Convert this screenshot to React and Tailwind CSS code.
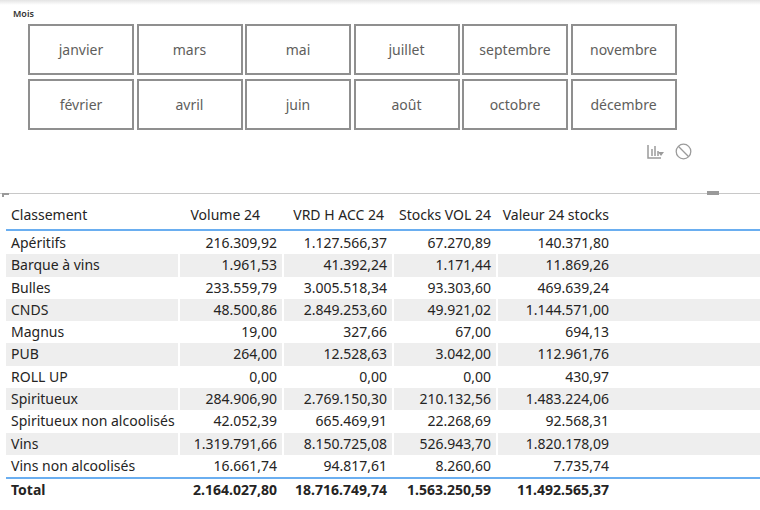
const months = [
  ["janvier", "mars", "mai", "juillet", "septembre", "novembre"],
  ["février", "avril", "juin", "août", "octobre", "décembre"],
];

const rows = [
  ["Apéritifs", "216.309,92", "1.127.566,37", "67.270,89", "140.371,80"],
  ["Barque à vins", "1.961,53", "41.392,24", "1.171,44", "11.869,26"],
  ["Bulles", "233.559,79", "3.005.518,34", "93.303,60", "469.639,24"],
  ["CNDS", "48.500,86", "2.849.253,60", "49.921,02", "1.144.571,00"],
  ["Magnus", "19,00", "327,66", "67,00", "694,13"],
  ["PUB", "264,00", "12.528,63", "3.042,00", "112.961,76"],
  ["ROLL UP", "0,00", "0,00", "0,00", "430,97"],
  ["Spiritueux", "284.906,90", "2.769.150,30", "210.132,56", "1.483.224,06"],
  ["Spiritueux non alcoolisés", "42.052,39", "665.469,91", "22.268,69", "92.568,31"],
  ["Vins", "1.319.791,66", "8.150.725,08", "526.943,70", "1.820.178,09"],
  ["Vins non alcoolisés", "16.661,74", "94.817,61", "8.260,60", "7.735,74"],
];

const cols = "grid grid-cols-[172px_104px_110px_104px_118px]";

export default function App() {
  return (
    <div className="w-[760px] h-[510px] bg-white relative overflow-hidden text-[#252423]" style={{ fontFamily: '"Noto Sans", "Open Sans", sans-serif' }}>
      <div className="h-[5px] bg-gradient-to-b from-[#e4e4e4] to-white" />
      <div className="pl-[13px] pt-[3px] text-[9px] font-semibold leading-[12px] text-[#333]">Mois</div>
      <div className="ml-[28px] mt-[4px] flex flex-col gap-[4px]">
        {months.map((r, i) => (
          <div key={i} className="flex gap-[2.5px]">
            {r.map((m) => (
              <div key={m} className="w-[106px] h-[51px] border-2 border-[#8f8f8f] flex items-center justify-center text-[14px] text-[#605e5c]">
                {m}
              </div>
            ))}
          </div>
        ))}
      </div>
      <div className="flex justify-end gap-[10px] pr-[68px] mt-[13px] text-[#9b9b9b]">
        <svg width="18" height="16" viewBox="0 0 18 16" fill="none" stroke="currentColor" strokeWidth="1.5">
          <path d="M1 2v13h13" />
          <path d="M5 13V6M8 13V3M11 13V8" />
          <path d="M11 9h6l-3 4z" fill="currentColor" stroke="none" />
        </svg>
        <svg width="17" height="17" viewBox="0 0 17 17" fill="none" stroke="currentColor" strokeWidth="1.3">
          <circle cx="8.5" cy="8.5" r="7.3" />
          <path d="M3.3 3.3l10.4 10.4" />
        </svg>
      </div>
      <div className="mt-[33px] border-t border-[#c8c8c8] relative">
        <div className="absolute left-[2px] -top-[1px] w-[7px] h-[4px] border-l-2 border-t-2 border-[#9a9a9a]" />
        <div className="absolute left-[707px] -top-[3px] w-[12px] h-[4px] bg-[#9a9a9a]" />
      </div>
      <div className="ml-[6px] mt-[7px] text-[14px] leading-[22.3px]">
        <div className={`${cols} h-[30px] items-center border-b-2 border-[#6aaef0]`}>
          <div className="pl-[5px]">Classement</div>
          <div className="text-right pr-[22px]">Volume 24</div>
          <div className="text-right pr-[8px]">VRD H ACC 24</div>
          <div className="text-right pr-[5px]">Stocks VOL 24</div>
          <div className="text-right pr-[5px]">Valeur 24 stocks</div>
        </div>
        <div className="pt-[1px]">
          {rows.map((r, i) => (
            <div key={r[0]} className={`${cols} ${i % 2 ? "bg-[#eeeeee]" : ""}`}>
              {r.map((c, j) => (
                <div key={j} className={`${j ? "text-right pr-[5px] border-l-2 border-white" : "pl-[5px]"}`}>{c}</div>
              ))}
            </div>
          ))}
        </div>
        <div className={`${cols} border-t-2 border-[#6aaef0] font-bold`}>
          <div className="pl-[5px]">Total</div>
          <div className="text-right pr-[5px]">2.164.027,80</div>
          <div className="text-right pr-[5px]">18.716.749,74</div>
          <div className="text-right pr-[5px]">1.563.250,59</div>
          <div className="text-right pr-[5px]">11.492.565,37</div>
        </div>
      </div>
    </div>
  );
}
